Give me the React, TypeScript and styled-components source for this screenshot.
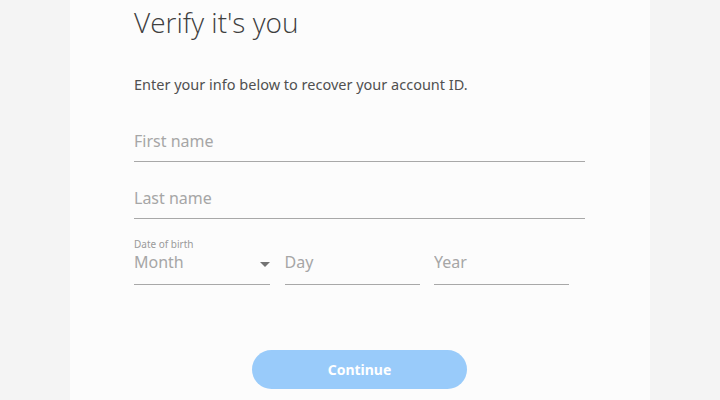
import React from 'react'
import styled, { createGlobalStyle } from 'styled-components'

const GlobalStyle = createGlobalStyle`
    html, body {
        margin: 0;
        padding: 0;
        background: #f4f4f4;
        font-family: "Noto Sans", "Open Sans", sans-serif;
    }
`

const Page = styled.main`
    height: 400px;
    overflow: hidden;
`

const Card = styled.section`
    width: 580px;
    height: 400px;
    margin: 0 auto;
    background: #fcfcfc;
    box-sizing: border-box;
    padding: 0 65px 0 64px;
    display: flex;
    flex-direction: column;
`

const Title = styled.h1`
    margin: 0;
    padding-top: 2px;
    font-family: "Open Sans", sans-serif;
    font-weight: 300;
    font-size: 28px;
    line-height: 40px;
    color: #3f3f3f;
`

const Intro = styled.p`
    margin: 32px 0 0;
    font-size: 14.5px;
    line-height: 20px;
    color: #505050;
`

const Field = styled.label<{ $width?: string }>`
    display: flex;
    flex-direction: column;
    justify-content: flex-end;
    width: ${p => p.$width || '100%'};
    border-bottom: 1px solid #a8a8a8;
`

const FieldRow = styled.div<{ $gap: number }>`
    margin-top: ${p => p.$gap}px;
`

const Caption = styled.span`
    font-size: 10px;
    line-height: 12px;
    color: #9a9a9a;
`

const Input = styled.input<{ $compact?: boolean }>`
    border: none;
    background: transparent;
    outline: none;
    padding: 0;
    height: ${p => (p.$compact ? '24px' : '32px')};
    margin-bottom: ${p => (p.$compact ? '10px' : '4px')};
    font-family: inherit;
    font-size: 16px;
    color: #333;
    &::placeholder {
        color: #a6a6a6;
    }
`

const DateRow = styled.div`
    margin-top: 19px;
    display: flex;
    gap: 14.5px;
    align-items: flex-end;
`

const Select = styled.div`
    display: flex;
    align-items: center;
    justify-content: space-between;
    height: 24px;
    margin-bottom: 10px;
    font-size: 16px;
    color: #a6a6a6;
`

const Caret = styled.span`
    width: 0;
    height: 0;
    border-left: 5.5px solid transparent;
    border-right: 5.5px solid transparent;
    border-top: 5px solid #737373;
    margin-top: 5px;
`

const Footer = styled.div`
    margin-top: auto;
    padding-bottom: 11px;
    display: flex;
    justify-content: center;
`

const Button = styled.button`
    width: 215px;
    height: 39px;
    border: none;
    border-radius: 20px;
    background: #99cbfa;
    color: #fff;
    font-family: inherit;
    font-weight: 700;
    font-size: 14px;
`

export default function App() {
    return (
        <Page>
            <GlobalStyle />
            <Card>
                <Title>Verify it's you</Title>
                <Intro>Enter your info below to recover your account ID.</Intro>
                <FieldRow $gap={31}>
                    <Field>
                        <Input placeholder="First name" />
                    </Field>
                </FieldRow>
                <FieldRow $gap={20}>
                    <Field>
                        <Input placeholder="Last name" />
                    </Field>
                </FieldRow>
                <DateRow>
                    <Field $width="136px">
                        <Caption>Date of birth</Caption>
                        <Select>
                            <span>Month</span>
                            <Caret />
                        </Select>
                    </Field>
                    <Field $width="135px">
                        <Input $compact placeholder="Day" />
                    </Field>
                    <Field $width="135px">
                        <Input $compact placeholder="Year" />
                    </Field>
                </DateRow>
                <Footer>
                    <Button>Continue</Button>
                </Footer>
            </Card>
        </Page>
    )
}
